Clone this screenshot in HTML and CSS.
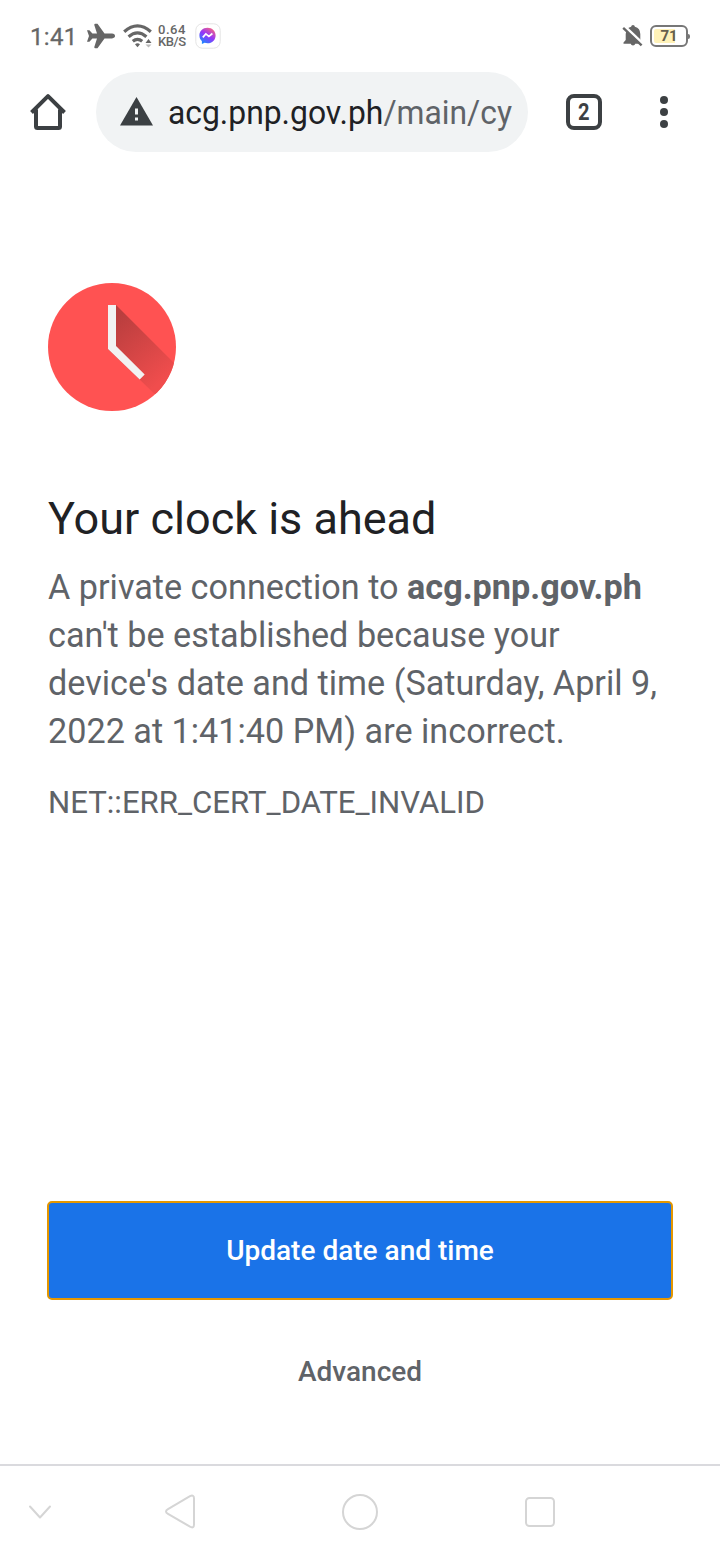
FILE: index.html
```html
<!DOCTYPE html>
<html lang="en">
<head>
<meta charset="utf-8">
<title>Privacy error</title>
<link rel="stylesheet" href="styles.css">
</head>
<body>
<header class="status">
  <span class="time">1:41</span>
  <svg class="plane" width="30" height="26" viewBox="0 0 30 26"><path d="M1 7.300h2.400l3 3.300h4.600L8.300 2Q8.200.800 9.300.800H11.500l7 9.800h7.500Q29 11 29 13t-3 2.400H18.500l-7 9.800H9.300q-1.100 0-1-1.200L11 15.400H6.400l-3 3.300H1L3 13z"/></svg>
  <svg class="wifi" width="30" height="26" viewBox="0 0 30 26"><g fill="none" stroke-width="3.200"><path d="M1.200 8.800Q14.500-3 27.800 8.800M5.600 13.800Q14.500 6.100 23.400 13.800M9.800 18.300Q14.500 14.400 19.200 18.300"/></g><path d="M12 21.200Q14.500 19.400 17 21.200L14.500 24.200z"/><path d="M25.500 16l3 4h-6z"/><path class="faint" d="M22.500 21.500h6l-3 3z"/></svg>
  <span class="speed"><span>0.64</span><span>KB/S</span></span>
  <svg class="messenger" width="26" height="26" viewBox="0 0 26 26"><defs><linearGradient id="m" x1="0.2" y1="1" x2="0.85" y2="0"><stop offset="0" stop-color="#128eff"/><stop offset=".5" stop-color="#9535fa"/><stop offset="1" stop-color="#ff6978"/></linearGradient></defs><rect x=".8" y=".8" width="24.4" height="24.4" rx="6.5" fill="#fff" stroke="#e4e4e4"/><path fill="url(#m)" d="M12.500 4.700C7.800 4.700 4.400 8 4.400 12.400c0 2.300 1 4.300 2.500 5.600v2.900l2.700-1.100c.9.3 1.900.4 2.900.4 4.700 0 8.100-3.400 8.100-7.800S17.200 4.700 12.500 4.700z"/><path d="M7.800 14.400l3-3.500 3.100 2.500 3.500-2.900" fill="none" stroke="#fff" stroke-width="1.700"/></svg>
  <svg class="bell" width="22" height="24" viewBox="0 0 22 24"><path d="M11 1q1.700 0 1.900 1.700Q18.300 4.300 18.300 10v6l2.200 2.500v1.200h-7.200a2.400 2.400 0 0 1-4.600 0H1.500v-1.200L3.700 16v-6Q3.700 4.300 9.100 2.700 9.300 1 11 1z"/><path class="gap" d="M1 1L23 21.800"/><path class="slash" d="M1.200 3.900l18.400 17.500"/></svg>
  <span class="battery"><span class="level">71</span></span>
</header>
<nav class="toolbar">
  <svg class="home" width="36" height="37" viewBox="0 0 36 37"><path d="M1.500 18.500L18 2.200 34.500 18.500M6 15.500v17Q6 34 7.500 34h21q1.500 0 1.500-1.500v-17"/></svg>
  <div class="omnibox">
    <svg class="warn" width="34" height="30" viewBox="0 0 34 30"><path d="M16.500 0L33 28.500H0z"/><path fill="#f1f3f4" d="M15 11.500h3v6h-3zM15 20.500h3v3h-3z"/></svg>
    <span class="url"><span class="host">acg.pnp.gov.ph</span>/main/cy</span>
  </div>
  <div class="tabs"><span class="count">2</span></div>
  <svg class="more" width="8" height="32" viewBox="0 0 8 32"><circle cx="4" cy="4" r="4"/><circle cx="4" cy="16" r="4"/><circle cx="4" cy="28" r="4"/></svg>
</nav>
<main class="page">
  <svg class="clock" width="128" height="128" viewBox="0 0 128 128"><defs><linearGradient id="s" gradientUnits="userSpaceOnUse" x1="64" y1="38" x2="116" y2="96"><stop offset="0" stop-color="#b93e3e"/><stop offset="1" stop-color="#f04d4d"/></linearGradient><clipPath id="c"><circle cx="64" cy="64" r="64"/></clipPath></defs><circle cx="64" cy="64" r="64" fill="#ff5252"/><path clip-path="url(#c)" fill="url(#s)" d="M68 22l70 70-18 32L60 66z"/><path fill="#f2f2f2" d="M60 22h8v41l28.700 28.500-5 5L60 66z"/></svg>
  <h1 class="title">Your clock is ahead</h1>
  <p class="message">A private connection to <strong>acg.pnp.gov.ph</strong><br>can't be established because your<br>device's date and time (Saturday, April 9,<br>2022 at 1:41:40 PM) are incorrect.</p>
  <p class="code">NET::ERR_CERT_DATE_INVALID</p>
  <div class="actions">
    <button class="update">Update date and time</button>
    <button class="advanced">Advanced</button>
  </div>
</main>
<footer class="navbar">
  <svg width="720" height="94" viewBox="0 0 720 94"><path d="M30 40.500L40 51.500 50 40.500"/><path d="M190 30.200Q194 28.200 194 32.500v26q0 4.300-4 2.200l-22-12.800q-4-2.400 0-4.800z"/><circle cx="360" cy="46" r="17"/><rect x="526" y="32" width="28" height="28" rx="3.500"/></svg>
</footer>
</body>
</html>
```
FILE: styles.css
```css
* { box-sizing: border-box; }
body { margin: 0; width: 720px; height: 1560px; display: flex; flex-direction: column; background: #fff; font-family: Roboto, sans-serif; overflow: hidden; }
svg { display: block; flex: none; }
.status { height: 72px; flex: none; display: flex; align-items: center; padding: 0 30px; color: #666; fill: #666; }
.time { width: 56px; font-size: 24px; letter-spacing: .3px; padding-top: 2px; white-space: nowrap; -webkit-text-stroke: .3px #666; }
.wifi { margin-left: 7px; stroke: #666; }
.wifi > path { stroke: none; }
.faint { fill: #bbb; }
.speed { display: flex; flex-direction: column; margin-left: 5px; width: 36px; font-size: 13px; font-weight: 500; line-height: 12px; letter-spacing: -.4px; white-space: nowrap; }
.speed span:first-child { letter-spacing: .5px; }
.messenger { margin-left: .5px; }
.bell { margin-left: auto; }
.bell .gap { stroke: #fff; stroke-width: 3; }
.bell .slash { stroke: #666; stroke-width: 2.4; }
.battery { position: relative; width: 38px; height: 22px; margin: 0 2px 0 6px; border: 2px solid #777; border-radius: 6px; padding: 2px; flex: none; }
.battery::after { content: ""; position: absolute; right: -4px; top: 7px; width: 2px; height: 5px; background: #777; border-radius: 0 2px 2px 0; }
.level { display: block; height: 14px; line-height: 15px; text-align: center; font-size: 15px; font-weight: 700; color: #66604d; background: linear-gradient(90deg, #fff2b8 70%, #fff 70%); border-radius: 2px; }
.toolbar { height: 80px; flex: none; display: flex; align-items: center; padding-left: 30px; }
.home { fill: none; stroke: #3c4043; stroke-width: 4; stroke-linejoin: round; }
.omnibox { width: 432px; height: 80px; margin-left: 30px; padding-left: 24px; display: flex; align-items: center; border-radius: 40px; background: #f1f3f4; }
.warn { fill: #3c4043; }
.url { margin-left: 14px; padding-top: 1px; font-size: 33px; color: #5f6368; white-space: nowrap; transform: scaleX(.965); transform-origin: left; }
.host { color: #202124; }
.tabs { width: 36px; height: 36px; margin-left: 38px; border: 4px solid #3c4043; border-radius: 8px; text-align: center; font: 700 24px/29px Roboto, sans-serif; color: #3c4043; }
.count { display: inline-block; transform: scaleX(.84); }
.more { margin-left: 58px; fill: #3c4043; }
.page { flex: 1; display: flex; flex-direction: column; padding: 131px 48px 0; color: #5f6368; }
.title { margin: 81px 0 0; font-size: 45px; font-weight: 400; line-height: 54px; color: #202124; white-space: nowrap; }
.message { margin: 18px 0 0; font-size: 35px; line-height: 48px; white-space: nowrap; transform: scaleX(.977); transform-origin: left; }
.code { margin: 23px 0 0; font-size: 31.5px; line-height: 48px; transform: scaleX(.989); transform-origin: left; }
.actions { margin-top: auto; padding-bottom: 45px; display: flex; flex-direction: column; }
button { border: 0; font: 500 28px Roboto, sans-serif; }
.update { height: 97px; margin-bottom: 24px; padding-bottom: 2px; border-radius: 4px; color: #fff; background: #1a73e8; outline: 2px solid #e59700; outline-offset: -1px; }
.advanced { height: 96px; color: #5f6368; background: #fff; }
.navbar { height: 96px; flex: none; border-top: 2px solid #dadade; }
.navbar svg { fill: none; stroke: #d5d5d5; stroke-width: 2; stroke-linecap: round; stroke-linejoin: round; }
```
